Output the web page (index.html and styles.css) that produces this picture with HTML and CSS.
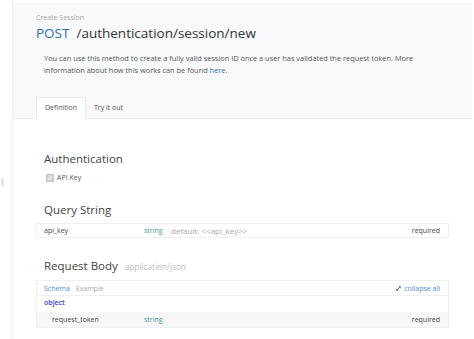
FILE: index.html
```html
<!DOCTYPE html>
<html lang="en">
  <head>
    <meta charset="UTF-8" />
    <meta name="viewport" content="width=device-width, initial-scale=1.0" />
    <title>Create Session</title>
    <link rel="stylesheet" href="styles.css">
  </head>
  <body>
    <div class="gutter"><span class="grip"></span></div>
    <main class="page">
      <header class="head">
        <div class="crumb">Create Session</div>
        <h1 class="endpoint"><span class="method">POST</span><span class="path">/authentication/session/new</span></h1>
        <p class="desc">You can use this method to create a fully valid session ID once a user has validated the request token. More information about how this works can be found <a href="#">here</a>.</p>
        <nav class="tabs">
          <a class="tab active" href="#">Definition</a>
          <a class="tab" href="#">Try it out</a>
        </nav>
      </header>

      <section class="content">
        <h2>Authentication</h2>
        <label class="auth">
          <span class="check"><svg width="6" height="6" viewBox="0 0 6 6"><path d="M1 3 L2.5 4.5 L5 1.5" stroke="#fff" stroke-width="1" fill="none"/></svg></span>API Key
        </label>

        <h2>Query String</h2>
        <div class="table">
          <div class="row">
            <span class="name">api_key</span>
            <span class="type">string</span>
            <span class="default">default: &lt;&lt;api_key&gt;&gt;</span>
            <span class="req">required</span>
          </div>
        </div>

        <h2>Request Body <span class="mime">application/json</span></h2>
        <div class="table">
          <div class="bar">
            <a class="sub active" href="#">Schema</a>
            <a class="sub" href="#">Example</a>
            <a class="collapse" href="#"><svg width="5" height="5" viewBox="0 0 6 6"><path d="M0.8 5.2 L5.2 0.8 M0.8 5.2 L0.8 3.2 M0.8 5.2 L2.8 5.2 M5.2 0.8 L3.2 0.8 M5.2 0.8 L5.2 2.8" stroke="#51627a" stroke-width="1" fill="none"/></svg>collapse all</a>
          </div>
          <div class="obj">object</div>
          <div class="row shade">
            <span class="name indent">request_token</span>
            <span class="type">string</span>
            <span class="default"></span>
            <span class="req">required</span>
          </div>
        </div>
      </section>
    </main>
  </body>
</html>
```

FILE: styles.css
```css
html,
body {
  margin: 0;
  font-family: "Open Sans", "Noto Sans", sans-serif;
  color: #444;
  background: #fff;
}

body {
  display: flex;
  height: 339px;
  overflow: hidden;
}

.gutter {
  width: 12px;
  flex: none;
  position: relative;
}

.grip {
  position: absolute;
  left: 1px;
  top: 178px;
  width: 3px;
  height: 8px;
  background: #e6e6e6;
}

.page {
  flex: 1;
  margin-right: 2px;
  border-left: 1px solid #eef0f2;
}

.head {
  margin-top: 3px;
  padding: 10px 0 0 23px;
  background: #f8f9fb;
  border-bottom: 1px solid #eceef0;
}

.crumb {
  font-size: 7px;
  line-height: 10px;
  color: #a6a6a6;
}

.endpoint {
  margin: 1px 0 0;
  font-size: 13.5px;
  font-weight: 400;
  line-height: 18px;
  color: #333;
}

.method {
  color: #2b6fb1;
  margin-right: 7px;
}

.desc {
  margin: 10px 20px 0 8px;
  font-size: 7.4px;
  line-height: 12px;
  color: #555;
}

.desc a {
  color: #2b6fb1;
  text-decoration: none;
}

.tabs {
  display: flex;
  margin-top: 21px;
}

.tab {
  padding: 5px 7px;
  font-size: 7px;
  line-height: 10px;
  color: #555;
  text-decoration: none;
  border: 1px solid transparent;
  border-bottom: none;
  margin-bottom: -1px;
}

.tab.active {
  background: #fff;
  border-color: #e6e8ea;
  padding: 5px 8px 6px;
}

.content {
  padding: 22px 23px 0 23px;
}

h2 {
  margin: 10px 0 5px 8px;
  font-size: 11.5px;
  font-weight: 400;
  line-height: 16px;
  color: #444;
}

.mime {
  margin-left: 4px;
  font-size: 8.2px;
  color: #bbb;
}

.auth {
  display: flex;
  align-items: center;
  margin: 6px 0 19px 10px;
  font-size: 7px;
  line-height: 10px;
  color: #555;
}

.check {
  display: flex;
  width: 6px;
  height: 6px;
  margin-right: 3px;
  background: #d4d4d4;
  border: 1px solid #c6c6c6;
}

.table {
  border: 1px solid #eef0f2;
  margin-bottom: 20px;
}

.table:last-child {
  margin-bottom: 0;
}

.row {
  display: flex;
  align-items: center;
  height: 13px;
  padding: 0 8px 0 7px;
  font-size: 7px;
}

.row .name {
  width: 100px;
  color: #444;
}

.row .indent {
  padding-left: 8px;
  width: 92px;
}

.row .type {
  width: 27px;
  color: #3d9b9b;
}

.row .default {
  flex: 1;
  font-size: 8px;
  color: #a8a8a8;
}

.row .req {
  color: #444;
}

.shade {
  height: 15px;
  background: #f7f7f7;
}

.bar {
  display: flex;
  align-items: center;
  height: 14px;
  padding: 0 8px 0 7px;
  border-bottom: 1px solid #eef0f2;
  font-size: 7px;
}

.sub {
  margin-right: 6px;
  color: #aaa;
  text-decoration: none;
}

.sub.active {
  color: #4a8fd6;
}

.collapse {
  margin-left: auto;
  display: flex;
  align-items: center;
  gap: 3px;
  color: #4a8fd6;
  text-decoration: none;
}

.obj {
  padding: 2px 7px 4px;
  font-size: 7px;
  line-height: 10px;
  font-weight: 600;
  color: #3d3dc8;
}
```
